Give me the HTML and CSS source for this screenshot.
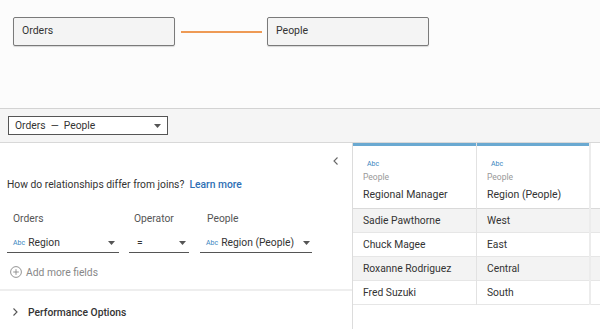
FILE: index.html
```html
<!DOCTYPE html>
<html>
<head>
<meta charset="utf-8">
<link rel="stylesheet" href="styles.css">
</head>
<body>
<div class="canvas">
  <div class="node">Orders</div>
  <div class="link"></div>
  <div class="node">People</div>
</div>
<div class="toolbar">
  <div class="select">
    <span>Orders&nbsp; —&nbsp; People</span>
    <svg class="caret" width="7" height="4" viewBox="0 0 7 4"><path d="M0 0H7L3.5 4Z" fill="#555"/></svg>
  </div>
</div>
<div class="main">
  <div class="left">
    <div class="collapse"><svg width="5" height="8" viewBox="0 0 5 8"><path d="M4.5 0.5L1 4L4.5 7.5" fill="none" stroke="#666" stroke-width="1.1"/></svg></div>
    <div class="question">How do relationships differ from joins?&nbsp; <a class="learn">Learn more</a></div>
    <div class="labels">
      <span class="c1">Orders</span><span class="c2">Operator</span><span class="c3">People</span>
    </div>
    <div class="fields">
      <div class="field f1"><span class="abc">Abc</span><span class="val">Region</span><svg class="caret" width="7" height="4" viewBox="0 0 7 4"><path d="M0 0H7L3.5 4Z" fill="#555"/></svg></div>
      <div class="field f2"><span class="val op">=</span><svg class="caret" width="7" height="4" viewBox="0 0 7 4"><path d="M0 0H7L3.5 4Z" fill="#555"/></svg></div>
      <div class="field f3"><span class="abc">Abc</span><span class="val">Region (People)</span><svg class="caret" width="7" height="4" viewBox="0 0 7 4"><path d="M0 0H7L3.5 4Z" fill="#555"/></svg></div>
    </div>
    <div class="add"><svg width="12" height="12" viewBox="0 0 12 12"><circle cx="6" cy="6" r="5.4" fill="none" stroke="#888" stroke-width="0.9"/><path d="M6 3.2V8.8M3.2 6H8.8" stroke="#888" stroke-width="0.9"/></svg><span>Add more fields</span></div>
    <div class="divider"></div>
    <div class="perf"><svg width="5" height="8" viewBox="0 0 5 8"><path d="M0.5 0.5L4 4L0.5 7.5" fill="none" stroke="#555" stroke-width="1.1"/></svg><span>Performance Options</span></div>
  </div>
  <div class="right">
    <div class="table">
      <div class="col col1">
        <div class="head"><div class="type">Abc</div><div class="src">People</div><div class="name">Regional Manager</div></div>
        <div class="cell odd">Sadie Pawthorne</div>
        <div class="cell">Chuck Magee</div>
        <div class="cell odd">Roxanne Rodriguez</div>
        <div class="cell">Fred Suzuki</div>
      </div>
      <div class="col col2">
        <div class="head"><div class="type">Abc</div><div class="src">People</div><div class="name">Region (People)</div></div>
        <div class="cell odd">West</div>
        <div class="cell">East</div>
        <div class="cell odd">Central</div>
        <div class="cell">South</div>
      </div>
      <div class="col col3">
        <div class="head"></div>
        <div class="cell odd"></div>
        <div class="cell"></div>
        <div class="cell odd"></div>
        <div class="cell"></div>
      </div>
    </div>
  </div>
</div>
</body>
</html>
```
FILE: styles.css
```css
* { box-sizing: border-box; }
html, body { margin: 0; padding: 0; }
body {
  width: 600px; height: 329px; overflow: hidden;
  font-family: Roboto, "Liberation Sans", sans-serif;
  font-size: 10.3px; color: #333; background: #fff;
}
.canvas {
  height: 108px; background: #fcfcfc;
  display: flex; align-items: flex-start;
  padding: 17px 0 0 13px;
}
.node {
  width: 162px; height: 29px;
  background: #f4f4f4;
  border: 1.5px solid #7a7a7a; border-radius: 2px;
  box-shadow: 0 1px 1px rgba(0,0,0,0.15);
  padding-left: 8px; line-height: 26px;
  color: #333; font-size: 10.5px;
}
.link {
  width: 81px; height: 1.5px; background: #ee9a55;
  margin: 14px 5px 0 6px;
}
.toolbar {
  height: 35px; background: #f5f5f5;
  border-top: 1px solid #d3d3d3; border-bottom: 1px solid #d8d8d8;
  display: flex; align-items: center; padding-left: 8px;
}
.select {
  width: 160px; height: 19px; background: #fff;
  border: 1px solid #555;
  display: flex; align-items: center; justify-content: space-between;
  padding: 0 6px 0 6px; color: #333;
}
.caret { flex: none; }
.main { display: flex; height: 186px; }
.left {
  width: 353px; flex: none;
  border-right: 1px solid #dcdcdc;
  display: flex; flex-direction: column;
}
.collapse {
  height: 12px; margin-top: 14px;
  display: flex; justify-content: flex-end; padding-right: 14px;
}
.question { margin-top: 9px; padding-left: 7px; line-height: 14px; }
.learn { color: #2f6fb5; font-weight: 500; }
.labels { margin-top: 20px; line-height: 14px; display: flex; color: #555; }
.labels .c1 { margin-left: 13px; width: 121px; }
.labels .c2 { width: 73px; }
.fields { display: flex; margin-top: 8px; height: 19px; }
.field {
  display: flex; align-items: center; height: 19px;
  border-bottom: 1px solid #555; padding-bottom: 1px;
}
.f1 { width: 112px; margin-left: 7px; padding-left: 6px; padding-right: 4px; }
.f2 { width: 60px; margin-left: 10px; padding-left: 8px; padding-right: 3px; }
.f3 { width: 112px; margin-left: 11px; padding-left: 6px; padding-right: 2px; }
.abc { font-size: 7px; color: #3a86c0; margin-right: 3px; margin-top: 1px; }
.val { flex: 1; color: #333; }
.add {
  margin-top: 12px; height: 14px; padding-left: 10px;
  display: flex; align-items: center; gap: 4px; color: #888;
}
.divider { margin-top: 10px; height: 2px; background: #eeeeee; }
.perf {
  margin-top: 14px; padding-left: 13px; height: 14px;
  display: flex; align-items: center; gap: 10px;
  color: #333; font-weight: 500;
}
.right { flex: 1; overflow: hidden; }
.table { display: flex; }
.col { flex: none; }
.col1 { width: 124px; border-right: 1px solid #e2e2e2; }
.col2 { width: 114px; border-right: 2px solid #ececec; }
.col3 { width: 20px; }
.head {
  height: 66px; border-top: 3px solid #6aa9d1;
  border-bottom: 1px solid #d9d9d9; background: #fff;
  padding: 13px 0 0 10px;
}
.col2 .head { padding-left: 10px; }
.col3 .head { border-top-color: #fff; }
.type { font-size: 7px; color: #3a86c0; line-height: 10px; margin-left: 4px; }
.src { color: #999; font-size: 8.5px; line-height: 12px; margin-top: 2px; }
.name { color: #333; font-size: 10.5px; line-height: 14px; margin-top: 5px; }
.cell {
  height: 24px; line-height: 23px; padding-left: 10px;
  border-bottom: 1px solid #e6e6e6; background: #fff; color: #333;
}
.col2 .cell { padding-left: 10px; }
.cell.odd { background: #f3f3f3; }
```
